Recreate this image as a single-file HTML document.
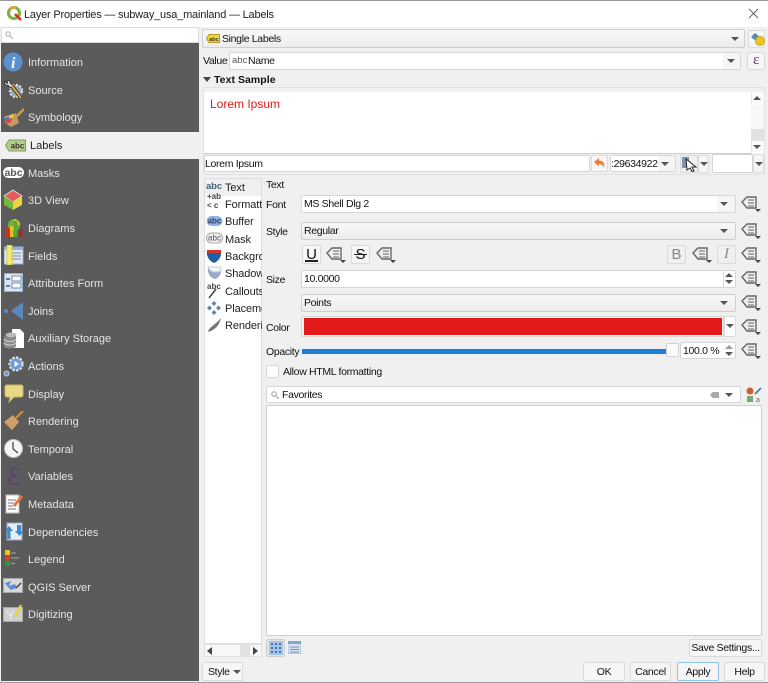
<!DOCTYPE html>
<html><head><meta charset="utf-8"><title>Layer Properties</title>
<style>
html,body{margin:0;padding:0;width:768px;height:683px;overflow:hidden;background:#f0f0f0}
body{position:relative;font-family:"Liberation Sans",sans-serif;font-size:10.5px;letter-spacing:-.33px;color:#111;filter:blur(.3px)}
div,svg{position:absolute;box-sizing:border-box}
.t{white-space:nowrap;height:16px;line-height:16px}
.s{color:#e4e4e4;left:28px;font-size:11px;letter-spacing:0}
.i{left:225px;font-size:11px;color:#222;width:37px;overflow:hidden;letter-spacing:-.1px}
.c{border:1px solid #cfcfcf;border-radius:2px;background:linear-gradient(#f8f8f8,#ececec)}
.w{border:1px solid #d6d6d6;border-radius:2px;background:#fff}
.b{border:1px solid #dadada;border-radius:2px;background:#f6f6f6;text-align:center;line-height:17px;white-space:nowrap}
.a{width:0;height:0;border-left:4px solid transparent;border-right:4px solid transparent;border-top:4px solid #555}
.u{border-left:4px solid transparent;border-right:4px solid transparent;border-bottom:4px solid #555;width:0;height:0}
</style></head><body>
<svg width="0" height="0" style="left:0;top:0"><defs>
<symbol id="dd" viewBox="0 0 20 18"><path d="M1 7 L6 2 H15 V13 H6 Z" fill="#eee" stroke="#666" stroke-width="1.4"/><path d="M7 5 H13 M7 8 H13 M7 11 H13" stroke="#666"/><path d="M14 14 H20 L17 17 Z" fill="#444"/></symbol>
</defs></svg>

<!-- title bar -->
<div style="left:0;top:0;width:768px;height:27px;background:#fff;border-top:1px solid #9a9a9a"></div>
<svg style="left:6px;top:5px" width="17" height="17" viewBox="0 0 17 17"><circle cx="8" cy="8" r="5.5" fill="none" stroke="#7fb23a" stroke-width="3"/><path d="M4 5 A5 5 0 0 1 10 3" fill="none" stroke="#e9a23b" stroke-width="2.5"/><path d="M9 9 L15 15" stroke="#c8392b" stroke-width="2.6"/></svg>
<div class="t" style="left:24px;top:7px;font-size:11px;color:#222;letter-spacing:-.2px">Layer Properties — subway_usa_mainland — Labels</div>
<svg style="left:748px;top:8px" width="11" height="11" viewBox="0 0 11 11"><path d="M1 1 L10 10 M10 1 L1 10" stroke="#666" stroke-width="1"/></svg>

<!-- sidebar -->
<div style="left:1px;top:27px;width:198px;height:16px;background:#fff;border:1px solid #ddd"></div>
<svg style="left:5px;top:31px" width="8" height="8" viewBox="0 0 8 8"><circle cx="3" cy="3" r="2.2" fill="none" stroke="#aaa"/><path d="M5 5 L8 8" stroke="#aaa"/></svg>
<div style="left:1px;top:43px;width:198px;height:638px;background:#5b5b5b"></div>
<div style="left:1px;top:132px;width:198px;height:27px;background:#f0f0f0"></div>

<div class="t s" style="top:55px">Information</div>
<div class="t s" style="top:83px">Source</div>
<div class="t s" style="top:110px">Symbology</div>
<div class="t s" style="top:138px;left:30px;color:#222">Labels</div>
<div class="t s" style="top:166px">Masks</div>
<div class="t s" style="top:193px">3D View</div>
<div class="t s" style="top:221px">Diagrams</div>
<div class="t s" style="top:249px">Fields</div>
<div class="t s" style="top:276px">Attributes Form</div>
<div class="t s" style="top:304px">Joins</div>
<div class="t s" style="top:331px">Auxiliary Storage</div>
<div class="t s" style="top:359px">Actions</div>
<div class="t s" style="top:387px">Display</div>
<div class="t s" style="top:414px">Rendering</div>
<div class="t s" style="top:442px">Temporal</div>
<div class="t s" style="top:469px">Variables</div>
<div class="t s" style="top:497px">Metadata</div>
<div class="t s" style="top:525px">Dependencies</div>
<div class="t s" style="top:552px">Legend</div>
<div class="t s" style="top:580px">QGIS Server</div>
<div class="t s" style="top:607px">Digitizing</div>

<!-- sidebar icons -->
<svg style="left:3px;top:52px" width="20" height="20" viewBox="0 0 20 20"><circle cx="10" cy="10" r="9.5" fill="#5a8fd0"/><text x="10" y="16" font-family="Liberation Serif" font-weight="bold" font-style="italic" font-size="16" fill="#fff" text-anchor="middle">i</text></svg>
<svg style="left:4px;top:80px" width="20" height="20" viewBox="0 0 20 20"><circle cx="12" cy="11" r="6" fill="#8fa3b8" stroke="#ddd" stroke-dasharray="2 1.5" stroke-width="2.400"/><path d="M1 1 C0 4 2 6 4 5 L7 8 L9 6 L6 3 C7 1 4 0 3 1 L4 3 L3 3.500Z" fill="#eee" stroke="#222" stroke-width=".7"/><path d="M8 6 L17 18" stroke="#222" stroke-width="3.600"/><path d="M8 6 L17 18" stroke="#d9b13b" stroke-width="2"/></svg>
<svg style="left:3px;top:108px" width="21" height="20" viewBox="0 0 21 20"><path d="M1 9 L13 5 L16 15 L8 19 L2 15Z" fill="#c59a62"/><path d="M1 9 L10 6 L11 9 L2 12Z" fill="#e6c93d"/><path d="M2 12 L9 10 L8 14 L3 16Z" fill="#d84a3a"/><path d="M1 10 L6 8 L6 11 L2 13Z" fill="#4a78c8"/><path d="M14 8 L21 1" stroke="#d89a3b" stroke-width="2.5"/></svg>
<svg style="left:5px;top:139px" width="21" height="13" viewBox="0 0 21 13"><path d="M.5 6.5 L4 1 H20.5 V12 H4Z" fill="#b5cd8b" stroke="#7f9f55"/><text x="12.5" y="9.5" font-size="8" font-weight="bold" fill="#333" text-anchor="middle" font-family="Liberation Sans" letter-spacing="0">abc</text></svg>
<svg style="left:2px;top:165px" width="23" height="15" viewBox="0 0 23 15"><rect x="1" y="2" width="21" height="11" rx="5.5" fill="#fff"/><text x="11.5" y="11" font-size="10.5" font-weight="bold" fill="#5b5b5b" text-anchor="middle" font-family="Liberation Sans" letter-spacing="0">abc</text></svg>
<svg style="left:3px;top:189px" width="20" height="22" viewBox="0 0 20 22"><path d="M10 1 L19 7 L10 13 L1 7Z" fill="#e55a5a" stroke="#ddd"/><path d="M1 7 L10 13 V21 L1 16Z" fill="#74b83a"/><path d="M19 7 L10 13 V21 L19 16Z" fill="#e8d53d"/></svg>
<svg style="left:4px;top:218px" width="20" height="20" viewBox="0 0 20 20"><circle cx="10" cy="7" r="6" fill="#6eb03c"/><path d="M10 7 V1 A6 6 0 0 1 16 7Z" fill="#e8c63d"/><rect x="6" y="8" width="3.5" height="11" fill="#e8c020"/><rect x="10" y="3" width="3.5" height="16" fill="#55aa33"/><rect x="15" y="11" width="3.5" height="8" fill="#a62a20"/><rect x="1" y="10" width="4" height="9" fill="#c8342a"/></svg>
<svg style="left:4px;top:245px" width="20" height="20" viewBox="0 0 20 20"><rect x="0" y="2" width="19" height="17" fill="#dfe8f2" stroke="#8fb0d4"/><path d="M0 2 H19 V5 H0Z" fill="#8fb3da"/><path d="M8 8 H17 M8 11 H17 M8 14 H17" stroke="#889" /><rect x="3" y="0" width="5" height="20" fill="#f3ea70" stroke="#d8cc40"/></svg>
<svg style="left:4px;top:273px" width="20" height="20" viewBox="0 0 20 20"><rect x=".5" y=".5" width="18" height="18" fill="#dde7f2" stroke="#8fb0d4"/><rect x="8" y="3" width="9" height="5" fill="#fff" stroke="#6f8fb4"/><rect x="8" y="10" width="9" height="5" fill="#fff" stroke="#6f8fb4"/><path d="M2 6 H6 M2 13 H6" stroke="#556" stroke-width="1.4"/></svg>
<svg style="left:3px;top:301px" width="21" height="20" viewBox="0 0 21 20"><circle cx="3" cy="10" r="2.2" fill="#5c86c0"/><path d="M20 1 V19 L8 10Z" fill="#5c86c0"/></svg>
<svg style="left:3px;top:328px" width="21" height="21" viewBox="0 0 21 21"><path d="M9 1 H17 L21 5 V20 H9Z" fill="#fff"/><ellipse cx="8" cy="7" rx="5.5" ry="2.5" fill="#bbb"/><path d="M1 7 V18 A6 2.5 0 0 0 13 18 V7 A6 2.5 0 0 1 1 7" fill="#8a8a8a"/><path d="M1 11 A6 2.5 0 0 0 13 11 M1 14.5 A6 2.5 0 0 0 13 14.5" fill="none" stroke="#ccc"/></svg>
<svg style="left:3px;top:356px" width="21" height="21" viewBox="0 0 21 21"><circle cx="13" cy="8" r="6.5" fill="#6d9cd8" stroke="#ddd" stroke-width="2.2" stroke-dasharray="2.5 1.3"/><path d="M11.5 5 L16 8 L11.5 11Z" fill="#fff"/><circle cx="3.5" cy="17.5" r="2.5" fill="#6d9cd8" stroke="#ccc"/></svg>
<svg style="left:4px;top:384px" width="20" height="19" viewBox="0 0 20 19"><path d="M3 1 H17 A2 2 0 0 1 19 3 V11 A2 2 0 0 1 17 13 H10 L5 18 L6 13 H3 A2 2 0 0 1 1 11 V3 A2 2 0 0 1 3 1Z" fill="#e8d888" stroke="#c9b860"/></svg>
<svg style="left:4px;top:411px" width="20" height="20" viewBox="0 0 20 20"><path d="M0 11 L9 4 L15 11 L8 19Z" fill="#cfa06a"/><path d="M12 7 L19 0" stroke="#c98f3b" stroke-width="2.2"/></svg>
<svg style="left:4px;top:439px" width="19" height="19" viewBox="0 0 19 19"><circle cx="9.5" cy="9.5" r="9" fill="#f5f5f5" stroke="#bbb"/><path d="M9 3 V10 L14 14" fill="none" stroke="#444" stroke-width="1.3"/></svg>
<svg style="left:6px;top:467px" width="16" height="19" viewBox="0 0 16 19"><path d="M13 3 C9 0 4 1 5 6 C5.500 8 8 9 10 9 C5 9 2 11 3 14 C4 18 10 18 13 15" fill="none" stroke="#5f3f6e" stroke-width="1.8"/></svg>
<svg style="left:5px;top:493px" width="19" height="21" viewBox="0 0 19 21"><path d="M1 2 H14 V20 H1Z" fill="#fff" stroke="#bbb"/><path d="M3 7 H11 M3 10 H9 M3 13 H8 M3 16 H11" stroke="#777"/><path d="M9 13 L17 3" stroke="#e4773a" stroke-width="3"/></svg>
<svg style="left:4px;top:522px" width="20" height="19" viewBox="0 0 20 19"><rect x="3" y="1" width="15" height="17" fill="#e6edf5" stroke="#9ab"/><path d="M1 9 L5 4 L9 9 H6.500 V17 H3.500 V9Z" fill="#3f8ad0"/><path d="M11 9 H13 V3 H17 V9 H20 L15.500 14Z" fill="#3f8ad0"/></svg>
<svg style="left:4px;top:549px" width="17" height="18" viewBox="0 0 17 18"><rect x="1" y="1" width="5" height="5" fill="#f1c01e"/><rect x="1" y="6.500" width="5" height="5" fill="#e23a1c"/><rect x="1" y="12" width="5" height="5" fill="#1da03a"/><path d="M7 4 H12 M7 9 H15 M7 14.500 H11" stroke="#999" stroke-width="1.3"/></svg>
<svg style="left:3px;top:578px" width="20" height="15" viewBox="0 0 20 15"><rect x=".5" y=".5" width="19" height="14" fill="#d8d8d8" stroke="#aaa"/><path d="M2 5 L8 3 L6 8 L12 6 L14 10 L8 12 L5 9Z" fill="#5c8ed0"/><path d="M13 10 L18 5" stroke="#444" stroke-width="1.4"/></svg>
<svg style="left:3px;top:604px" width="20" height="18" viewBox="0 0 20 18"><rect x=".5" y="3.500" width="19" height="14" fill="#cfcfcf" stroke="#aaa"/><path d="M3 7 L8 12 M10 6 L7 15" stroke="#eee"/><path d="M12 13 L18 1" stroke="#e8d240" stroke-width="2.400"/></svg>

<!-- top right controls -->
<div class="c" style="left:202px;top:29px;width:543px;height:19px"></div>
<svg style="left:206px;top:34px" width="14" height="9" viewBox="0 0 14 9"><path d="M.5 4.500 L3 .5 H13.500 V8.500 H3Z" fill="#f0d43a" stroke="#b89a1e"/><text x="8" y="7" font-size="5.500" font-weight="bold" text-anchor="middle" fill="#333" font-family="Liberation Sans" letter-spacing="0">abc</text></svg>
<div class="t" style="left:222px;top:31px">Single Labels</div>
<div class="a" style="left:731px;top:37px"></div>
<div class="b" style="left:748px;top:30px;width:17px;height:18px"></div>
<svg style="left:750px;top:32px" width="15" height="14" viewBox="0 0 15 14"><path d="M1 5 L5 1 L10 5 L6 9Z" fill="#5a86b8"/><circle cx="10" cy="9" r="4.500" fill="#e8c820" stroke="#c8a818"/></svg>

<div class="t" style="left:203px;top:53px">Value</div>
<div class="w" style="left:229px;top:52px;width:512px;height:18px"></div>
<div style="left:723px;top:53px;width:17px;height:16px;background:#f5f5f5"></div>
<div class="t" style="left:232px;top:53px;font-size:9.500px;color:#555;letter-spacing:0">abc</div>
<div class="t" style="left:248px;top:53px">Name</div>
<div class="a" style="left:727px;top:59px"></div>
<div class="b" style="left:747px;top:52px;width:18px;height:18px;color:#5f3f6e;font-size:15px;font-family:'Liberation Serif';line-height:15px">ε</div>

<!-- Text sample -->
<div style="left:203px;top:77px;width:0;height:0;border-left:4px solid transparent;border-right:4px solid transparent;border-top:5px solid #444"></div>
<div class="t" style="left:214px;top:72px;font-weight:bold;letter-spacing:.05px;color:#111">Text Sample</div>
<div style="left:203px;top:87px;width:562px;height:88px;border:1px solid #e2e2e2"></div>
<div style="left:204px;top:92px;width:547px;height:62px;background:#fff;border-bottom:1px solid #ccc"></div>
<div class="t" style="left:210px;top:96px;font-size:12px;color:#e31a1c;letter-spacing:0">Lorem Ipsum</div>
<div style="left:751px;top:92px;width:13px;height:62px;background:#fbfbfb;border-left:1px solid #e6e6e6"></div>
<div class="u" style="left:753px;top:96px"></div>
<div style="left:751px;top:105px;width:13px;height:24px;background:#f7f7f7"></div>
<div style="left:751px;top:129px;width:13px;height:12px;background:#e2e2e2"></div>
<div class="a" style="left:753px;top:145px"></div>

<div class="w" style="left:204px;top:155px;width:386px;height:17px"></div>
<div class="t" style="left:205px;top:156px;color:#111">Lorem Ipsum</div>
<div class="b" style="left:591px;top:155px;width:17px;height:17px"></div>
<svg style="left:593px;top:157px" width="13" height="13" viewBox="0 0 13 13"><path d="M1 5 L6 1 V3.500 C10 3.500 12 6 11 11 C10 8 8 7 6 7 V9.500Z" fill="#e8803a"/></svg>
<div class="w" style="left:610px;top:155px;width:66px;height:17px;background:#f5f5f5"></div>
<div class="t" style="left:611px;top:156px;background:#fff;width:47px;height:15px;color:#111">:29634922</div>
<div class="a" style="left:661px;top:162px"></div>
<div class="b" style="left:680px;top:155px;width:18px;height:18px;background:#efefef"></div>
<svg style="left:681px;top:156px" width="17" height="16" viewBox="0 0 17 16"><path d="M1 1 H8 V12 H1Z" fill="#7e95ac"/><path d="M5 3 L15 11 L11 11 L13 15 L11 15.500 L9 12 L6 14Z" fill="#fff" stroke="#222"/></svg>
<div class="b" style="left:698px;top:155px;width:11px;height:18px"></div>
<div class="a" style="left:700px;top:162px"></div>
<div class="w" style="left:712px;top:154px;width:41px;height:19px"></div>
<div class="b" style="left:753px;top:154px;width:11px;height:19px"></div>
<div class="a" style="left:755px;top:162px"></div>

<!-- lower left list -->
<div style="left:204px;top:178px;width:58px;height:466px;background:#fff;border:1px solid #dcdcdc"></div>
<div style="left:205px;top:179px;width:56px;height:17px;background:#f0f0f0"></div>
<div class="t i" style="top:180px">Text</div>
<div class="t i" style="top:197px">Formatting</div>
<div class="t i" style="top:214px">Buffer</div>
<div class="t i" style="top:232px">Mask</div>
<div class="t i" style="top:249px">Background</div>
<div class="t i" style="top:266px">Shadow</div>
<div class="t i" style="top:284px">Callouts</div>
<div class="t i" style="top:301px">Placement</div>
<div class="t i" style="top:318px">Rendering</div>

<div class="t" style="left:206px;top:179px;font-size:9.500px;font-weight:bold;color:#3f5f80;width:18px;letter-spacing:-.1px">abc</div>
<div class="t" style="left:207px;top:192px;font-size:8px;font-weight:bold;color:#444;line-height:9px;height:18px;letter-spacing:0">+ab<br>&lt; c</div>
<svg style="left:206px;top:215px" width="17" height="12" viewBox="0 0 17 12"><rect x=".5" y="1" width="16" height="10" rx="5" fill="#8fb2e8"/><text x="8.500" y="8.500" font-size="8" font-weight="bold" fill="#345" text-anchor="middle" font-family="Liberation Sans" letter-spacing="0">abc</text></svg>
<svg style="left:206px;top:232px" width="17" height="12" viewBox="0 0 17 12"><rect x=".5" y="1" width="16" height="10" rx="5" fill="#eee" stroke="#aaa"/><text x="8.500" y="8.500" font-size="8" fill="#556" text-anchor="middle" font-family="Liberation Sans" letter-spacing="0">abc</text></svg>
<svg style="left:206px;top:249px" width="16" height="14" viewBox="0 0 16 14"><path d="M1 1 H15 C16 7 13 12 8 14 C3 12 0 7 1 1Z" fill="#1f5fa8"/><path d="M1 1 H15 L15 4 H1Z" fill="#d8342a"/></svg>
<svg style="left:207px;top:266px" width="15" height="14" viewBox="0 0 15 14"><path d="M1 1 C0 7 3 12 8 13 C12 12 14 8 14 5 C8 7 3 6 1 1Z" fill="#9aa9c8"/><path d="M1 1 H14 V5 C8 7 3 6 1 1Z" fill="#f4f6fb" stroke="#ccd"/></svg>
<div class="t" style="left:207px;top:279px;font-size:8px;font-weight:bold;color:#444;letter-spacing:0">abc</div>
<svg style="left:208px;top:287px" width="12" height="12" viewBox="0 0 12 12"><path d="M1 11 L8 2" stroke="#444" stroke-width="1.500"/></svg>
<svg style="left:206px;top:300px" width="16" height="16" viewBox="0 0 16 16"><g fill="#5f86a8"><path d="M8 1 L10.500 3.500 L8 6 L5.500 3.500Z"/><path d="M3.500 5.500 L6 8 L3.500 10.500 L1 8Z"/><path d="M12.500 5.500 L15 8 L12.500 10.500 L10 8Z"/><path d="M8 10 L10.500 12.500 L8 15 L5.500 12.500Z"/></g></svg>
<svg style="left:207px;top:318px" width="15" height="15" viewBox="0 0 15 15"><path d="M1 14 C2 9 7 8 14 0 C12 8 8 12 1 14Z" fill="#777"/></svg>

<div style="left:204px;top:644px;width:58px;height:13px;background:#f7f7f7;border:1px solid #e2e2e2"></div>
<div style="left:207px;top:647px;border-top:4px solid transparent;border-bottom:4px solid transparent;border-right:5px solid #444;width:0;height:0"></div>
<div style="left:240px;top:645px;width:10px;height:11px;background:#e2e2e2"></div>
<div style="left:253px;top:647px;border-top:4px solid transparent;border-bottom:4px solid transparent;border-left:5px solid #444;width:0;height:0"></div>

<!-- form -->
<div class="t" style="left:266px;top:177px">Text</div>
<div class="t" style="left:266px;top:197px">Font</div>
<div class="t" style="left:266px;top:224px">Style</div>
<div class="t" style="left:266px;top:272px">Size</div>
<div class="t" style="left:266px;top:320px">Color</div>
<div class="t" style="left:266px;top:344px">Opacity</div>

<div class="w" style="left:301px;top:195px;width:435px;height:18px"></div>
<div style="left:717px;top:196px;width:18px;height:16px;background:#f5f5f5"></div>
<div class="t" style="left:304px;top:196px">MS Shell Dlg 2</div>
<div class="a" style="left:720px;top:202px"></div>

<div class="c" style="left:301px;top:222px;width:435px;height:18px"></div>
<div class="t" style="left:304px;top:223px">Regular</div>
<div class="a" style="left:720px;top:229px"></div>

<div class="b" style="left:302px;top:245px;width:19px;height:19px;font-size:15px;color:#111;letter-spacing:0">U</div>
<div style="left:305px;top:260px;width:13px;height:2px;background:#222"></div>
<div class="b" style="left:351px;top:245px;width:19px;height:19px;font-size:15px;color:#111;letter-spacing:0">S</div>
<div style="left:354px;top:254px;width:13px;height:1px;background:#222"></div>
<div class="b" style="left:667px;top:245px;width:19px;height:19px;font-size:15px;color:#888;background:#f0f0f0;letter-spacing:0">B</div>
<div class="b" style="left:717px;top:245px;width:19px;height:19px;font-size:15px;color:#888;font-style:italic;font-family:'Liberation Serif';background:#f0f0f0;letter-spacing:0">I</div>

<div class="w" style="left:301px;top:270px;width:435px;height:18px"></div>
<div class="t" style="left:304px;top:271px">10.0000</div>
<div style="left:723px;top:271px;width:1px;height:16px;background:#ddd"></div>
<div class="u" style="left:725px;top:273px"></div>
<div class="a" style="left:725px;top:280px"></div>

<div class="c" style="left:301px;top:294px;width:435px;height:18px"></div>
<div class="t" style="left:304px;top:295px">Points</div>
<div class="a" style="left:720px;top:301px"></div>

<div class="w" style="left:301px;top:316px;width:423px;height:21px;background:#f4f4f4"></div>
<div style="left:303.500px;top:318px;width:418px;height:17px;background:#e31a1c"></div>
<div class="b" style="left:724px;top:316px;width:12px;height:21px;background:#fff"></div>
<div class="a" style="left:726px;top:324px"></div>

<div style="left:302px;top:349px;width:365px;height:5px;background:#1a80d8"></div>
<div style="left:666px;top:343px;width:13px;height:14px;background:#fafafa;border:1px solid #d2d2d2;border-radius:2px"></div>
<div class="w" style="left:680px;top:342px;width:56px;height:17px"></div>
<div class="t" style="left:683px;top:343px">100.0 %</div>
<div class="u" style="left:725px;top:345px;border-bottom-color:#999"></div>
<div class="a" style="left:725px;top:352px"></div>

<svg style="left:326px;top:246px" width="20" height="18"><use href="#dd"/></svg>
<svg style="left:376px;top:246px" width="20" height="18"><use href="#dd"/></svg>
<svg style="left:692px;top:246px" width="20" height="18"><use href="#dd"/></svg>
<svg style="left:741px;top:195px" width="20" height="18"><use href="#dd"/></svg>
<svg style="left:741px;top:222px" width="20" height="18"><use href="#dd"/></svg>
<svg style="left:741px;top:246px" width="20" height="18"><use href="#dd"/></svg>
<svg style="left:741px;top:270px" width="20" height="18"><use href="#dd"/></svg>
<svg style="left:741px;top:294px" width="20" height="18"><use href="#dd"/></svg>
<svg style="left:741px;top:318px" width="20" height="18"><use href="#dd"/></svg>
<svg style="left:741px;top:342px" width="20" height="18"><use href="#dd"/></svg>

<div class="w" style="left:266px;top:365px;width:13px;height:13px;background:#fdfdfd"></div>
<div class="t" style="left:283px;top:364px">Allow HTML formatting</div>

<div class="w" style="left:266px;top:386px;width:475px;height:17px"></div>
<svg style="left:271px;top:391px" width="8" height="8" viewBox="0 0 8 8"><circle cx="3" cy="3" r="2.200" fill="none" stroke="#999"/><path d="M5 5 L8 8" stroke="#999"/></svg>
<div class="t" style="left:282px;top:387px">Favorites</div>
<svg style="left:710px;top:392px" width="9" height="6" viewBox="0 0 9 6"><path d="M0 3 L2.500 0 H9 V6 H2.500Z" fill="#aaa"/></svg>
<div class="a" style="left:725px;top:393px"></div>
<svg style="left:746px;top:387px" width="16" height="16" viewBox="0 0 16 16"><circle cx="4" cy="4" r="3.500" fill="#c8622e"/><rect x="1" y="9" width="6" height="6" fill="#7aa874"/><path d="M9 7 L15 1" stroke="#4a78a8" stroke-width="1.600"/><text x="12" y="15" font-size="7" fill="#666" text-anchor="middle" font-family="Liberation Sans" letter-spacing="0">a</text></svg>

<div style="left:266px;top:405px;width:496px;height:231px;background:#fff;border:1px solid #cfcfcf"></div>

<div style="left:266px;top:639px;width:19px;height:18px;background:#e4e4e4;border:1px solid #cfcfcf;border-radius:2px"></div>
<svg style="left:269px;top:641px" width="14" height="14" viewBox="0 0 14 14"><rect width="14" height="14" fill="#a9c4e4"/><path d="M2 2 H4 V4 H2Z M6 2 H8 V4 H6Z M10 2 H12 V4 H10Z M2 6 H4 V8 H2Z M6 6 H8 V8 H6Z M10 6 H12 V8 H10Z M2 10 H4 V12 H2Z M6 10 H8 V12 H6Z M10 10 H12 V12 H10Z" fill="#3f74b4"/></svg>
<svg style="left:288px;top:641px" width="13" height="13" viewBox="0 0 13 13"><rect width="13" height="13" fill="#d8e4f2" stroke="#8fb0d8"/><path d="M0 0 H13 V3 H0Z" fill="#7fa6d6"/><path d="M2 6 H11 M2 8.500 H11 M2 11 H11" stroke="#7d8fa8"/></svg>

<div class="b" style="left:689px;top:639px;width:73px;height:18px;line-height:16px">Save Settings...</div>

<div class="b" style="left:202px;top:662px;width:41px;height:19px;text-align:left;padding-left:5px;line-height:18px">Style</div>
<div class="a" style="left:233px;top:670px"></div>
<div class="b" style="left:583px;top:662px;width:42px;height:19px;line-height:18px">OK</div>
<div class="b" style="left:630px;top:662px;width:41px;height:19px;line-height:18px">Cancel</div>
<div class="b" style="left:677px;top:662px;width:42px;height:19px;line-height:18px;border-color:#8fc4ec">Apply</div>
<div class="b" style="left:724px;top:662px;width:41px;height:19px;line-height:18px">Help</div>
<div style="left:0;top:682px;width:768px;height:1px;background:#9a9a9a"></div>
</body></html>
